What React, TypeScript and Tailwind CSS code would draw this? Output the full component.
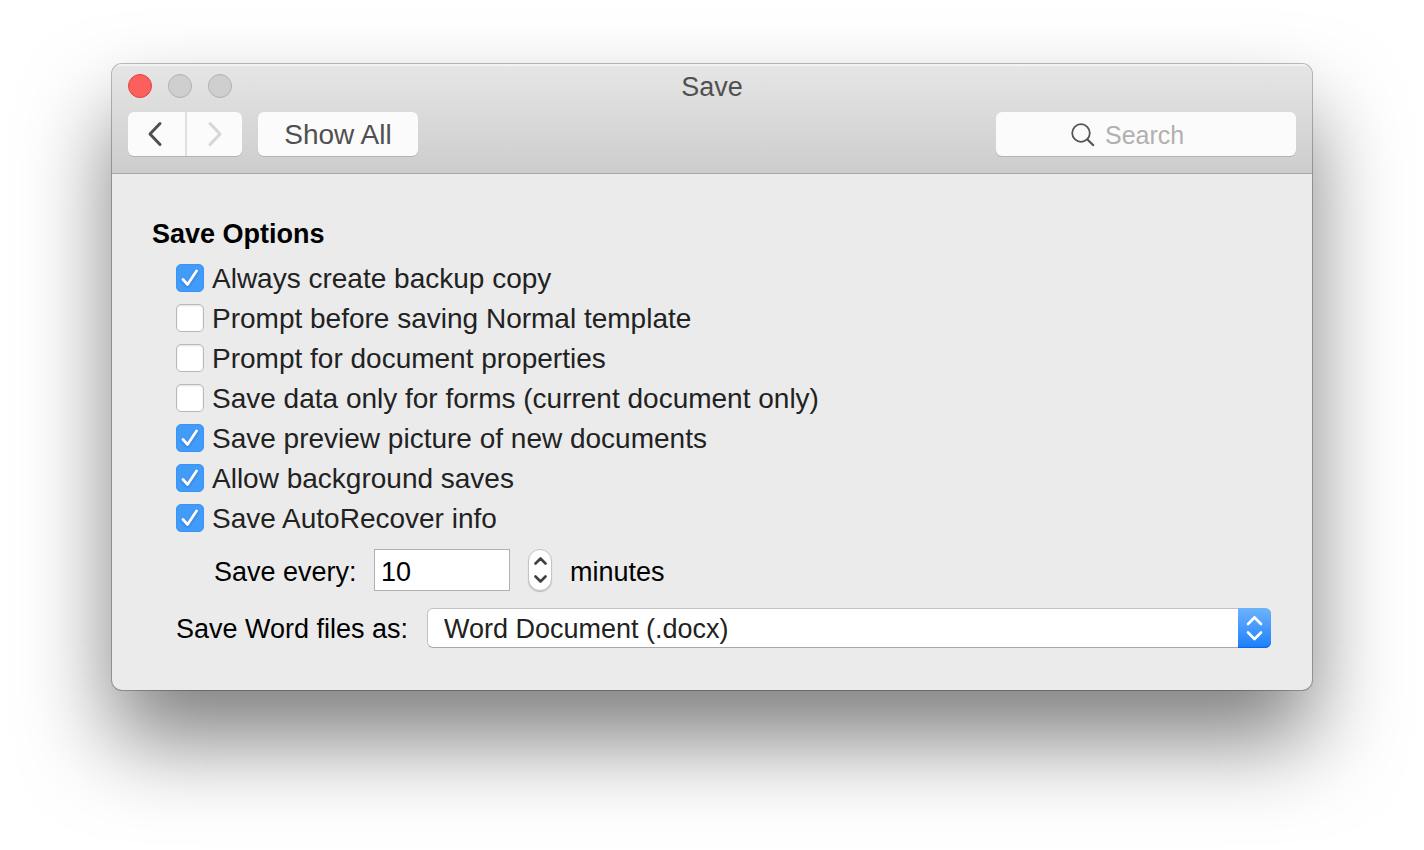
import { useState, type ReactNode } from "react";

type OptionKey =
  | "backup"
  | "normalTemplate"
  | "properties"
  | "formData"
  | "preview"
  | "background"
  | "autoRecover";

const options: { key: OptionKey; label: string }[] = [
  { key: "backup", label: "Always create backup copy" },
  { key: "normalTemplate", label: "Prompt before saving Normal template" },
  { key: "properties", label: "Prompt for document properties" },
  { key: "formData", label: "Save data only for forms (current document only)" },
  { key: "preview", label: "Save preview picture of new documents" },
  { key: "background", label: "Allow background saves" },
  { key: "autoRecover", label: "Save AutoRecover info" },
];

const initialOptions: Record<OptionKey, boolean> = {
  backup: true,
  normalTemplate: false,
  properties: false,
  formData: false,
  preview: true,
  background: true,
  autoRecover: true,
};

const toolbarButton =
  "flex h-11 items-center justify-center bg-[#fbfbfb] text-[#505050] shadow-[0_1px_0_#b4b4b4]";

export default function App() {
  const [checked, setChecked] = useState(initialOptions);
  const [minutes, setMinutes] = useState("10");
  const [format, setFormat] = useState("docx");
  const [query, setQuery] = useState("");

  const toggle = (key: OptionKey) =>
    setChecked((prev) => ({ ...prev, [key]: !prev[key] }));

  const step = (amount: number) =>
    setMinutes((prev) => String(Math.max(1, (Number(prev) || 0) + amount)));

  return (
    <div className="min-h-screen overflow-hidden bg-white px-28 py-16 font-['Liberation_Sans',Arial,sans-serif] text-[27px] leading-8 text-black">
      <main className="overflow-hidden rounded-[10px] bg-[#ebebeb] shadow-[0_0_0_1px_rgba(0,0,0,0.26),0_50px_88px_rgba(0,0,0,0.5)]">
        <header className="border-b border-[#a9a9a9] bg-linear-to-b from-[#e6e6e6] to-[#cdcdcd] px-4 pb-[17px] shadow-[inset_0_2px_0_#f2f2f2]">
          <div className="grid h-12 grid-cols-3 items-center pb-1">
            <div className="flex gap-4">
              <WindowButton label="Close" className="border-[#e0443f] bg-[#fc605c]" />
              <WindowButton label="Minimize" className="border-[#b0b0b0] bg-[#cfcfcf]" />
              <WindowButton label="Zoom" className="border-[#b0b0b0] bg-[#cfcfcf]" />
            </div>
            <h1 className="pt-0.5 text-center text-[#505050]">Save</h1>
          </div>

          <div className="flex items-center">
            <button type="button" aria-label="Back" className={`${toolbarButton} w-[57px] rounded-l-md`}>
              <svg width="16" height="26" viewBox="0 0 16 26" fill="none" stroke="currentColor" strokeWidth="3" strokeLinecap="round" strokeLinejoin="round" className="-ml-1">
                <path d="M13 2.500 3 13l10 10.500" />
              </svg>
            </button>
            <button type="button" aria-label="Forward" disabled className={`${toolbarButton} w-[57px] rounded-r-md border-l-2 border-[#e0e0e0]`}>
              <svg width="16" height="26" viewBox="0 0 16 26" fill="none" stroke="#d6d6d6" strokeWidth="3" strokeLinecap="round" strokeLinejoin="round">
                <path d="m3 2.500 10 10.500L3 23.500" />
              </svg>
            </button>
            <button type="button" className={`${toolbarButton} ml-4 w-40 rounded-md pt-0.5 text-[28px]`}>
              Show All
            </button>
            <label className="ml-auto flex h-11 w-[300px] items-center justify-center gap-2.5 rounded-md bg-[#fbfbfb] pt-0.5 shadow-[0_1px_0_#b4b4b4]">
              <svg width="24" height="24" viewBox="0 0 24 24" fill="none" stroke="#555" strokeWidth="1.8">
                <circle cx="10" cy="10" r="8.8" />
                <path d="m16.2 16.2 6.6 6.6" strokeWidth="2.2" />
              </svg>
              <input
                type="text"
                aria-label="Search"
                placeholder="Search"
                value={query}
                onChange={(event) => setQuery(event.target.value)}
                className="w-[116px] bg-transparent text-[25px] text-[#505050] outline-none placeholder:text-[#b0b0b0]"
              />
            </label>
          </div>
        </header>

        <form className="pt-10 pr-[41px] pb-[42px] pl-10" onSubmit={(event) => event.preventDefault()}>
          <h2 className="mb-1.5 pt-0.5 leading-9 font-bold">Save Options</h2>

          <div className="pl-6">
            {options.map(({ key, label }) => (
              <Checkbox key={key} checked={checked[key]} onChange={() => toggle(key)}>
                {label}
              </Checkbox>
            ))}

            <div className="mt-[11px] flex items-center pl-[38px]">
              <label htmlFor="minutes" className="w-40 shrink-0 pt-1">
                Save every:
              </label>
              <input
                id="minutes"
                type="text"
                inputMode="numeric"
                value={minutes}
                onChange={(event) => setMinutes(event.target.value)}
                className="h-[42px] w-[136px] border border-[#b1b1b1] bg-white px-1.5 pt-1 outline-none"
              />
              <div className="mx-[18px] flex h-[42px] w-6 flex-col rounded-full border border-[#c4c4c4] bg-white text-[#404040] shadow-[0_1px_1px_rgba(0,0,0,0.2)]">
                <button type="button" aria-label="Increase" onClick={() => step(1)} className="flex flex-1 items-end justify-center pb-1">
                  <Chevron d="m1.5 6.5 5-5 5 5" />
                </button>
                <button type="button" aria-label="Decrease" onClick={() => step(-1)} className="flex flex-1 items-start justify-center pt-1.5">
                  <Chevron d="m1.5 1.5 5 5 5-5" />
                </button>
              </div>
              <span className="pt-1">minutes</span>
            </div>

            <div className="mt-[17px] flex items-center">
              <label htmlFor="format" className="w-[251px] shrink-0 pt-0.5">
                Save Word files as:
              </label>
              <div className="relative h-10 flex-1">
                <select
                  id="format"
                  value={format}
                  onChange={(event) => setFormat(event.target.value)}
                  className="h-10 w-full appearance-none rounded-md border border-[#c2c2c2] border-b-[#a8a8a8] bg-white pt-0.5 pr-10 pl-4 text-[#222] outline-none"
                >
                  <option value="docx">Word Document (.docx)</option>
                  <option value="doc">Word 97-2004 Document (.doc)</option>
                </select>
                <span className="pointer-events-none absolute inset-y-0 right-0 flex w-[33px] items-center justify-center rounded-r-md bg-linear-to-b from-[#6cb3fa] to-[#157efb] shadow-[inset_0_-1px_0_#0f62ee]">
                  <svg width="17" height="26" viewBox="0 0 17 26" fill="none" stroke="white" strokeWidth="2.6" strokeLinecap="round" strokeLinejoin="round">
                    <path d="m2 9 6.500-6.500L15 9M2 17.500l6.500 6.500 6.500-6.500" />
                  </svg>
                </span>
              </div>
            </div>
          </div>
        </form>
      </main>
    </div>
  );
}

function WindowButton({ label, className }: { label: string; className: string }) {
  return (
    <button type="button" aria-label={label} className={`h-6 w-6 rounded-full border ${className}`} />
  );
}

function Chevron({ d }: { d: string }) {
  return (
    <svg width="13" height="8" viewBox="0 0 13 8" fill="none" stroke="currentColor" strokeWidth="2.6" strokeLinecap="round" strokeLinejoin="round">
      <path d={d} />
    </svg>
  );
}

function Checkbox({
  checked,
  onChange,
  children,
}: {
  checked: boolean;
  onChange: () => void;
  children: ReactNode;
}) {
  return (
    <label className="flex h-10 items-center gap-2 text-[28px] text-[#222]">
      <span className="relative h-7 w-7 shrink-0">
        <input
          type="checkbox"
          checked={checked}
          onChange={onChange}
          className="block h-7 w-7 appearance-none rounded-[5px] border border-[#b8b8b8] bg-white shadow-[inset_0_1px_2px_rgba(0,0,0,0.12)] checked:border-[#3b93f7] checked:bg-[#419bf9] checked:shadow-none"
        />
        {checked && (
          <svg viewBox="0 0 28 28" fill="none" stroke="white" strokeWidth="2.8" strokeLinecap="round" strokeLinejoin="round" className="pointer-events-none absolute inset-0 drop-shadow-[0_1px_1px_rgba(0,0,0,0.25)]">
            <path d="m7 15.500 4.500 5L20.500 7" />
          </svg>
        )}
      </span>
      <span className="pt-0.5">{children}</span>
    </label>
  );
}
